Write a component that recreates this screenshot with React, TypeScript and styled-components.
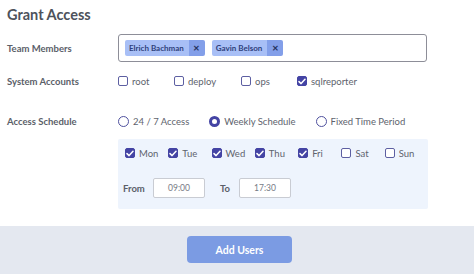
import React from "react"
import styled, { createGlobalStyle } from "styled-components"

const GlobalStyle = createGlobalStyle`
  html, body {
    margin: 0;
    padding: 0;
    background: #ffffff;
  }
  body {
    font-family: "Lato", "Open Sans", sans-serif;
    color: #555b66;
  }
`

const Page = styled.div`
  width: 474px;
  height: 274px;
  display: flex;
  flex-direction: column;
  overflow: hidden;
`

const Body = styled.div`
  padding-left: 7px;
  display: flex;
  flex-direction: column;
`

const Title = styled.h1`
  margin: 0;
  height: 30px;
  line-height: 30px;
  font-size: 14.5px;
  font-weight: 700;
  color: #4d525b;
`

const Row = styled.div<{ $top: number; $height?: number }>`
  display: flex;
  align-items: center;
  height: ${(p) => p.$height ?? 12}px;
  margin-top: ${(p) => p.$top}px;
`

const Label = styled.div`
  width: 111px;
  flex: none;
  font-size: 9.5px;
  font-weight: 700;
  color: #5b6069;
`

const TagBox = styled.div`
  width: 309px;
  height: 28px;
  box-sizing: border-box;
  border: 1px solid #8d8e98;
  border-radius: 3px;
  display: flex;
  align-items: center;
  gap: 7px;
  padding-left: 6px;
`

const Chip = styled.div`
  display: flex;
  height: 16px;
  border-radius: 2px;
  overflow: hidden;
  font-size: 8px;
  font-weight: 700;
  color: #2f3f7c;
`

const ChipText = styled.span`
  background: #a8bff6;
  padding: 0 5px 0 4px;
  display: flex;
  align-items: center;
`

const ChipClose = styled.span`
  background: #839fe9;
  width: 16px;
  display: flex;
  align-items: center;
  justify-content: center;
  font-size: 8px;
  color: #27345f;
`

const Options = styled.div<{ $gap: number }>`
  display: flex;
  align-items: center;
  gap: ${(p) => p.$gap}px;
`

const Option = styled.label<{ $width?: number }>`
  display: flex;
  align-items: center;
  gap: 4px;
  font-size: 9.5px;
  color: #5e636d;
  ${(p) => (p.$width ? `width: ${p.$width}px;` : "")}
`

const Box = styled.span<{ $checked?: boolean }>`
  width: 10px;
  height: 10px;
  box-sizing: border-box;
  border: 1.5px solid ${(p) => (p.$checked ? "#4444a4" : "#5d5fa2")};
  border-radius: 2px;
  background: ${(p) => (p.$checked ? "#4444a4" : "#ffffff")};
  display: flex;
  align-items: center;
  justify-content: center;
  flex: none;
`

const Radio = styled.span<{ $checked?: boolean }>`
  width: 11px;
  height: 11px;
  box-sizing: border-box;
  border-radius: 50%;
  border: ${(p) => (p.$checked ? "3px solid #4444a4" : "1.5px solid #4f519e")};
  background: #ffffff;
  flex: none;
`

const Panel = styled.div`
  margin-top: 12px;
  margin-left: 111px;
  width: 310px;
  height: 70px;
  box-sizing: border-box;
  background: #eef4fd;
  border-radius: 2px;
  padding: 7px 0 0 7px;
  display: flex;
  flex-direction: column;
`

const Days = styled.div`
  display: flex;
  align-items: center;
  height: 14px;
`

const TimeRow = styled.div`
  display: flex;
  align-items: center;
  margin-top: 18px;
`

const TimeLabel = styled.span<{ $width: number }>`
  width: ${(p) => p.$width}px;
  font-size: 9.5px;
  font-weight: 700;
  color: #5b6069;
  margin-left: -2px;
`

const TimeInput = styled.div`
  width: 52px;
  height: 20px;
  box-sizing: border-box;
  background: #ffffff;
  border: 1px solid #c9ccd3;
  border-radius: 2px;
  display: flex;
  align-items: center;
  justify-content: center;
  font-size: 8.5px;
  color: #767b85;
`

const Gap = styled.span<{ $w: number }>`
  width: ${(p) => p.$w}px;
  flex: none;
`

const Footer = styled.div`
  margin-top: 17px;
  flex: 1;
  background: #e4e8f0;
  display: flex;
  justify-content: center;
  align-items: flex-start;
  padding: 10px 0 0 5px;
`

const Button = styled.button`
  width: 105px;
  height: 27px;
  border: none;
  border-radius: 4px;
  background: #7b9be3;
  color: #ffffff;
  font-family: inherit;
  font-size: 10.5px;
  font-weight: 700;
`

function Check() {
  return (
    <svg width="8" height="7" viewBox="0 0 8 7">
      <path d="M1 3.6 L3.1 5.6 L7 1.3" fill="none" stroke="#ffffff" strokeWidth="1.5" strokeLinecap="round" strokeLinejoin="round" />
    </svg>
  )
}

function CheckOption({ label, checked, width }: { label: string; checked?: boolean; width?: number }) {
  return (
    <Option $width={width}>
      <Box $checked={checked}>{checked && <Check />}</Box>
      {label}
    </Option>
  )
}

function RadioOption({ label, checked }: { label: string; checked?: boolean }) {
  return (
    <Option>
      <Radio $checked={checked} />
      {label}
    </Option>
  )
}

const days = [
  { name: "Mon", on: true },
  { name: "Tue", on: true },
  { name: "Wed", on: true },
  { name: "Thu", on: true },
  { name: "Fri", on: true },
  { name: "Sat", on: false },
  { name: "Sun", on: false },
]

export default function App() {
  return (
    <Page>
      <GlobalStyle />
      <Body>
        <Title>Grant Access</Title>
        <Row $top={4} $height={28}>
          <Label>Team Members</Label>
          <TagBox>
            {["Elrich Bachman", "Gavin Belson"].map((name) => (
              <Chip key={name}>
                <ChipText>{name}</ChipText>
                <ChipClose>✕</ChipClose>
              </Chip>
            ))}
          </TagBox>
        </Row>
        <Row $top={13}>
          <Label>System Accounts</Label>
          <Options $gap={0}>
            <CheckOption label="root" width={56} />
            <CheckOption label="deploy" width={67} />
            <CheckOption label="ops" width={56} />
            <CheckOption label="sqlreporter" checked />
          </Options>
        </Row>
        <Row $top={28}>
          <Label>Access Schedule</Label>
          <Options $gap={20}>
            <RadioOption label="24 / 7 Access" />
            <RadioOption label="Weekly Schedule" checked />
            <RadioOption label="Fixed Time Period" />
          </Options>
        </Row>
        <Panel>
          <Days>
            {days.map((d) => (
              <CheckOption key={d.name} label={d.name} checked={d.on} width={44} />
            ))}
          </Days>
          <TimeRow>
            <TimeLabel $width={30}>From</TimeLabel>
            <TimeInput>09:00</TimeInput>
            <Gap $w={17} />
            <TimeLabel $width={19}>To</TimeLabel>
            <TimeInput>17:30</TimeInput>
          </TimeRow>
        </Panel>
      </Body>
      <Footer>
        <Button>Add Users</Button>
      </Footer>
    </Page>
  )
}
